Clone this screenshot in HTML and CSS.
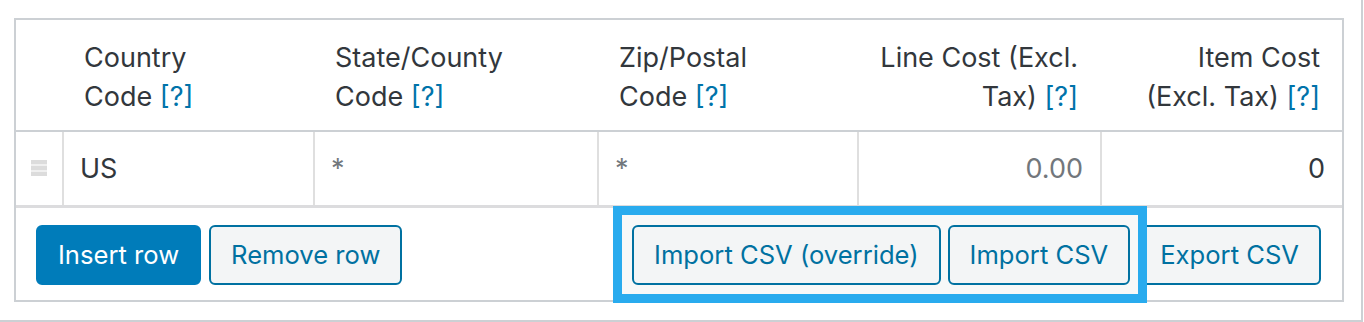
FILE: index.html
```html
<!DOCTYPE html>
<html lang="en">
<head>
    <meta charset="UTF-8">
    <meta name="viewport" content="width=device-width, initial-scale=1.0">
    <title>Tax rates</title>
    <link rel="stylesheet" href="styles.css">
</head>
<body>
    <div class="panel">
        <table class="rates">
            <colgroup>
                <col class="col-sort">
                <col class="col-country">
                <col class="col-state">
                <col class="col-zip">
                <col class="col-line">
                <col class="col-item">
            </colgroup>
            <thead>
                <tr>
                    <th class="sort"></th>
                    <th>Country<br>Code <a href="#" class="tip">[?]</a></th>
                    <th>State/County<br>Code <a href="#" class="tip">[?]</a></th>
                    <th>Zip/Postal<br>Code <a href="#" class="tip">[?]</a></th>
                    <th class="num">Line Cost (Excl.<br>Tax) <a href="#" class="tip">[?]</a></th>
                    <th class="num">Item Cost<br>(Excl. Tax) <a href="#" class="tip">[?]</a></th>
                </tr>
            </thead>
            <tbody>
                <tr>
                    <td class="sort"><span class="handle"></span></td>
                    <td><input type="text" value="US"></td>
                    <td><input type="text" placeholder="*"></td>
                    <td><input type="text" placeholder="*"></td>
                    <td><input type="text" class="num" placeholder="0.00"></td>
                    <td><input type="text" class="num" value="0"></td>
                </tr>
            </tbody>
            <tfoot>
                <tr>
                    <th colspan="6">
                        <div class="actions">
                            <div class="group">
                                <a href="#" class="button primary">Insert row</a>
                                <a href="#" class="button">Remove row</a>
                            </div>
                            <div class="group">
                                <!-- highlighted import buttons -->
                                <span class="highlight">
                                    <a href="#" class="button">Import CSV (override)</a>
                                    <a href="#" class="button">Import CSV</a>
                                </span>
                                <a href="#" class="button">Export CSV</a>
                            </div>
                        </div>
                    </th>
                </tr>
            </tfoot>
        </table>
    </div>
</body>
</html>
```

FILE: styles.css
```css
body {
    margin: 0;
    font-family: Inter, "Liberation Sans", Arial, sans-serif;
    color: #32373c;
    background: #fff;
}
.panel {
    width: 1363px;
    box-sizing: border-box;
    padding: 18px 17px 18px 14px;
    border-right: 2px solid #ccd0d4;
    border-bottom: 2px solid #ccd0d4;
}
.rates {
    width: 1330px;
    box-sizing: border-box;
    table-layout: fixed;
    border-collapse: separate;
    border-spacing: 0;
    border: 2px solid #ccd0d4;
}
.col-sort { width: 46px; }
.col-country { width: 251px; }
.col-state { width: 284px; }
.col-zip { width: 260px; }
.col-line { width: 243px; }
.col-item { width: 242px; }

/* header */
thead th {
    height: 112px;
    box-sizing: border-box;
    padding: 18px 22px 14px;
    font-size: 27px;
    line-height: 39px;
    font-weight: normal;
    text-align: left;
    white-space: nowrap;
    border-bottom: 2px solid #ccd0d4;
}
thead th.sort {
    padding: 0;
}
thead th.num {
    text-align: right;
}
.tip {
    color: #0073aa;
    text-decoration: none;
}

/* row */
tbody td {
    height: 73px;
    padding: 0;
    box-sizing: border-box;
    border-left: 2px solid #dfdfdf;
}
tbody td.sort {
    border-left: none;
    text-align: center;
}
.handle {
    display: inline-block;
    width: 16px;
    height: 16px;
    margin-top: 3px;
    background: repeating-linear-gradient(#dcdcdc 0 4px, #f0f0f0 4px 6px);
}
tbody input {
    display: block;
    width: 100%;
    height: 73px;
    box-sizing: border-box;
    padding: 0 17px 0 16px;
    border: none;
    background: transparent;
    font-family: inherit;
    font-size: 27px;
    color: #32373c;
    outline: none;
}
tbody input::placeholder {
    color: #72777c;
}
tbody input.num {
    text-align: right;
}

/* footer */
tfoot th {
    height: 95px;
    box-sizing: border-box;
    padding: 17px 21px 15px 20px;
    border-top: 3px solid #dcdcde;
    font-weight: normal;
}
.actions {
    display: flex;
    justify-content: space-between;
    align-items: center;
}
.group {
    display: flex;
    gap: 8px;
    align-items: center;
}
.button {
    display: inline-block;
    height: 60px;
    box-sizing: border-box;
    padding: 0 20px;
    border: 2px solid #0071a1;
    border-radius: 6px;
    background: #f3f5f6;
    color: #0071a1;
    font-size: 25.6px;
    line-height: 56px;
    text-decoration: none;
    white-space: nowrap;
}
.button.primary {
    background: #007cba;
    border-color: #007cba;
    color: #fff;
}
.highlight {
    position: relative;
    z-index: 1;
    display: flex;
    gap: 7px;
    margin: -19px -17px -18px -19px;
    padding: 10px 8px 9px 10px;
    border: 9px solid #29abee;
    background: #f7f8f8;
}
```
